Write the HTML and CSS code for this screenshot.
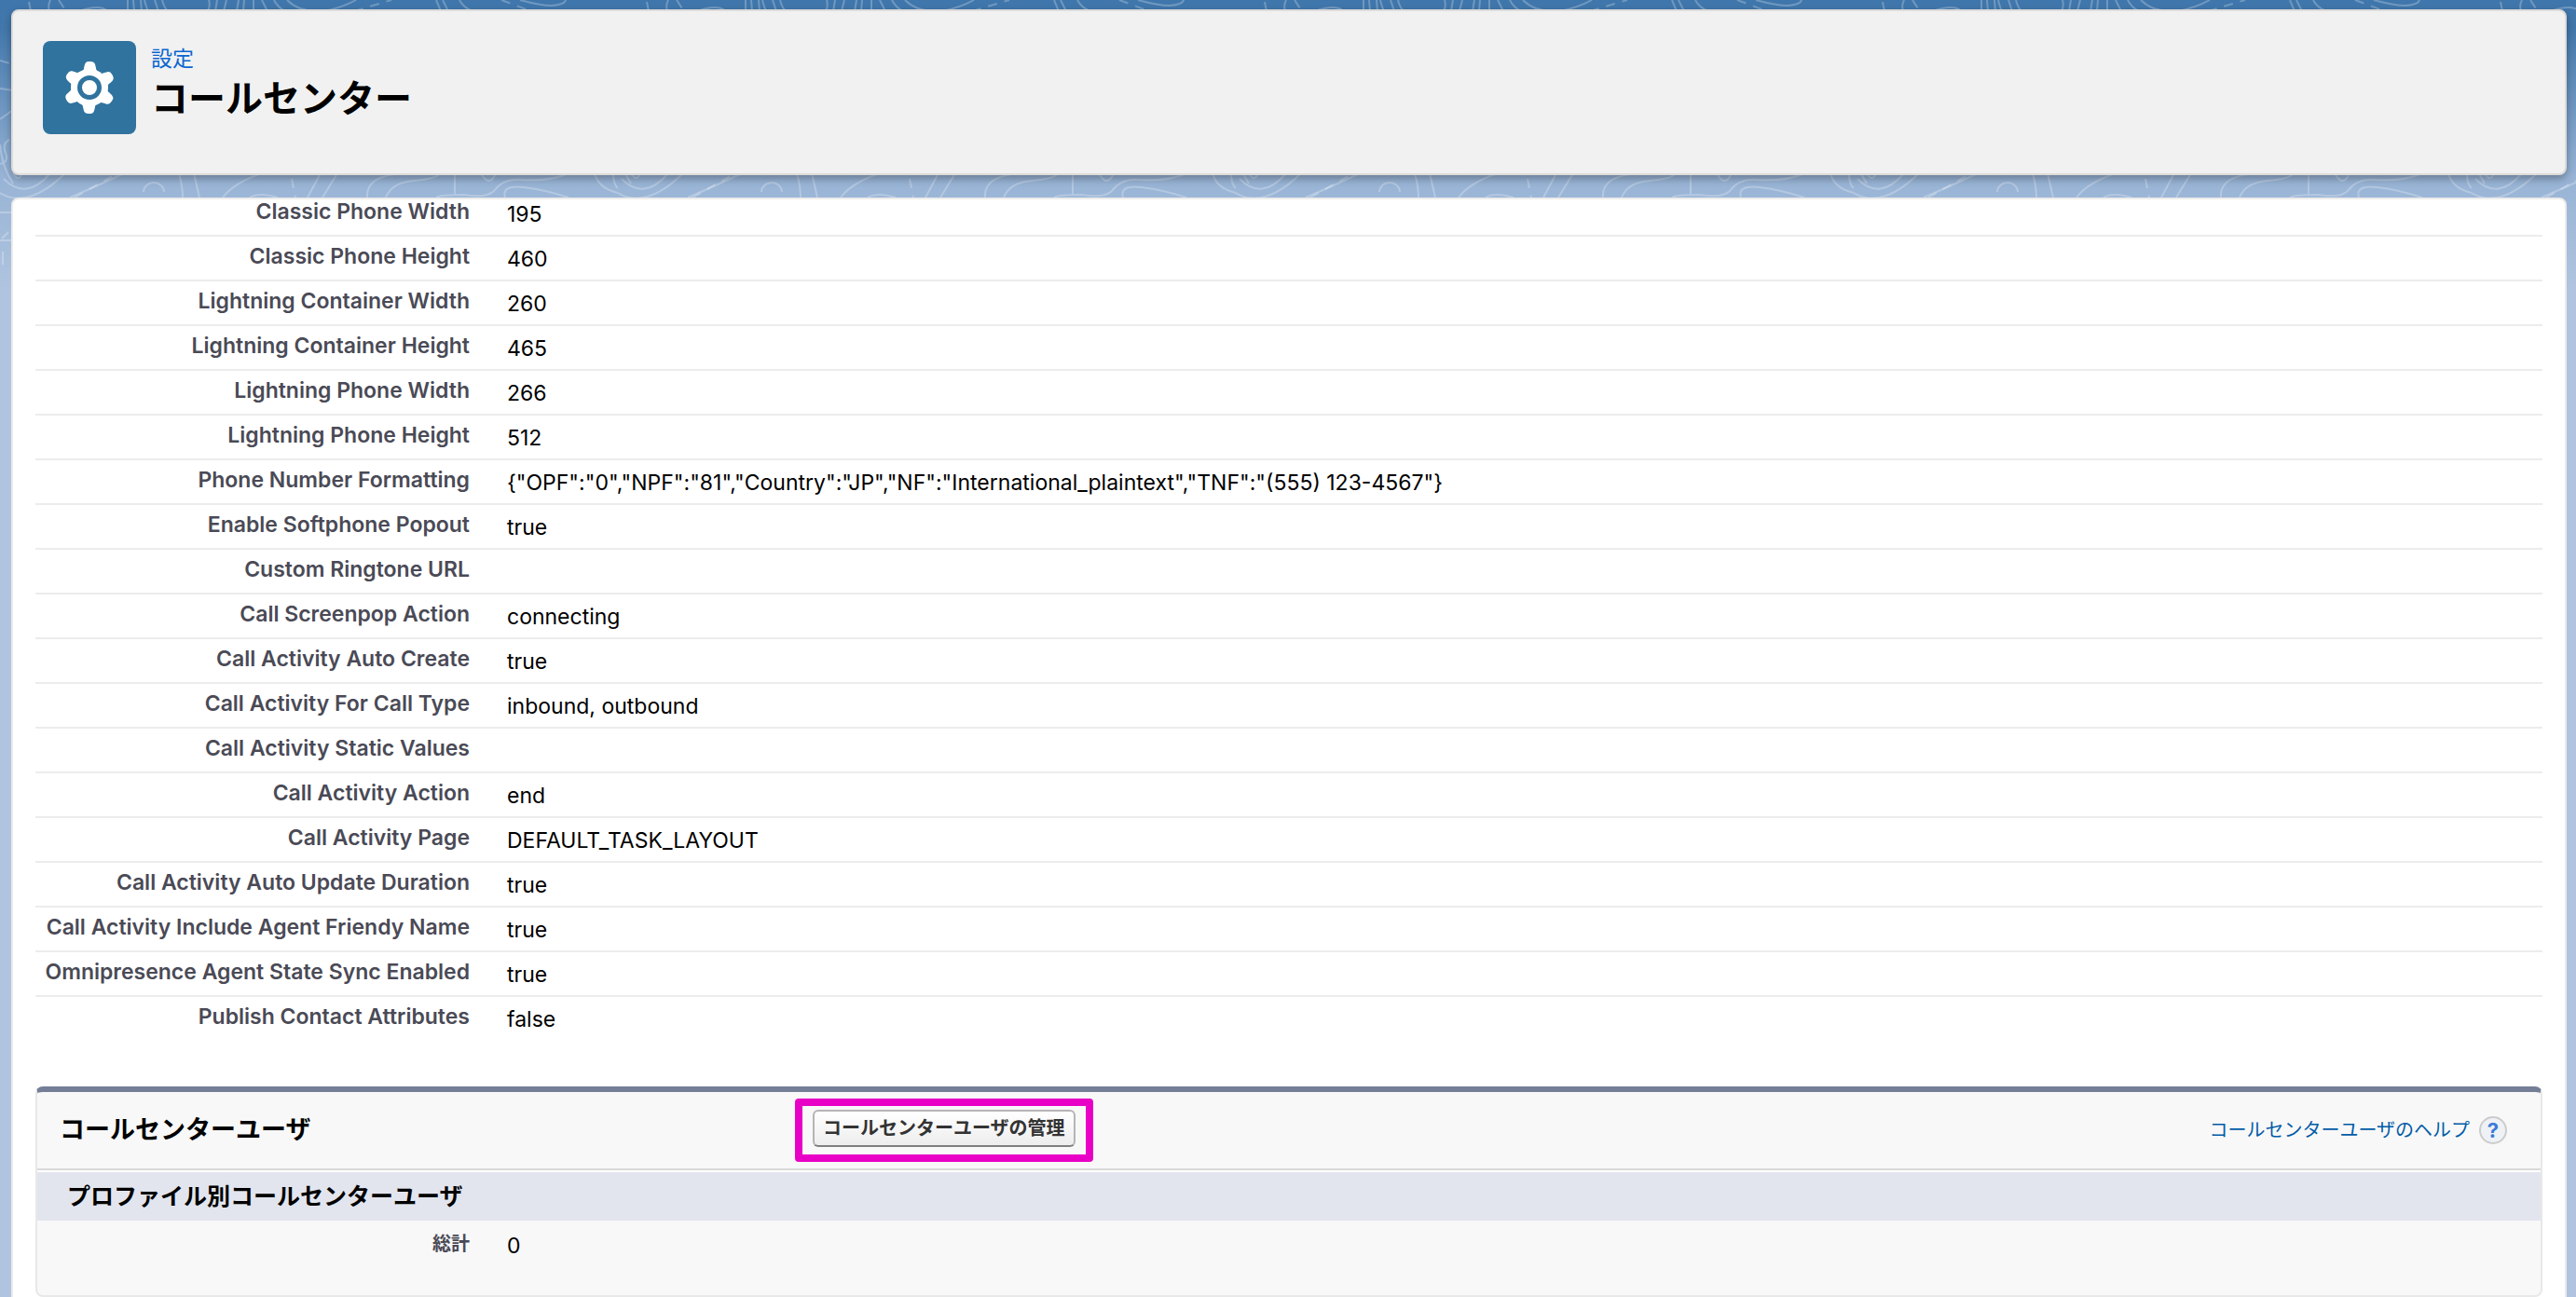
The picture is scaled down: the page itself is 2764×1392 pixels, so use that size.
FILE: index.html
```html
<!DOCTYPE html>
<html lang="ja">
<head>
<meta charset="UTF-8">
<meta name="viewport" content="width=device-width, initial-scale=1.0">
<title>コールセンター</title>
<link rel="stylesheet" href="styles.css">
</head>
<body>
<svg class="contours" aria-hidden="true">
  <defs>
    <pattern id="topo" width="663" height="400" patternUnits="userSpaceOnUse">
      <g fill="none" stroke="#fff" stroke-opacity=".25" stroke-width="2">
        <path d="M31 2l2 10M54 0q-3 6-1 12M85 12q22-8 31 0M137 0v12M143 0l1 12M151 0l1 12M155 0q2 8 4 12M166 0l4 12M174 0q2 8 6 12M224 0q2 6-1 12M233 0l-2 12M243 0l-3 12M256 0l-2 12M262 0l-1 12M272 0v12M281 0l6 12M294 0q4 8 12 12M308 0q14 14 40 12q20-4 34-12M468 0l5 12M475 0l6 12M493 0q4 8 14 12M558 0q22 6 34 6q14-1 15-6"/>
        <path d="M0 95l14 2M0 128l14-10M10 150q-8 4-4 14t-6 12M0 155q2 24 14 42M0 207q30 18 70-21M4 192q24 24 50-6M14 186q6 10 10 0M75 212q35-15 58-26M154 206a11 10 0 1 1 22 0M192 186q4 14 4 26M208 186l6 26M239 212q12-16 42-26M268 212q10-6 30 0M330 212l14-26M346 212l16-26M394 212q-2-24 40-26M414 212q6-16 30-18t28-8M488 186v24M468 212q4-3 30-3q24 4 32-4q10-14 30-12q30 2 50-7M542 212q-4-14 20-11t48 11"/>
        <path d="M516 186q9 16 16 0M638 186q4 16 25 21M0 228h14M0 258h14M3 270v14M658 186q0 12 5 16M640 20q10-10 23-8M638 72q12 4 25 2M647 106l16 40"/>
        <path stroke-dasharray="10 8" d="M80 212l46-26M63 0l8 12M380 12l40-12M313 192l4 20M538 0l32 12M0 65l14 4M2 256l8-8"/>
      </g>
    </pattern>
  </defs>
  <rect width="100%" height="100%" fill="url(#topo)"/>
</svg>

<header class="page-header">
  <div class="header-icon">
    <svg viewBox="0 0 100 100" width="100" height="100" aria-hidden="true">
      <defs>
        <path id="tooth" d="M41 33q3-1 3-4l1-4q1-3 4-3h2q4 0 5 3l1 4q0 3 3 4l-4 8h-12z"/>
      </defs>
      <g fill="#fff">
        <circle cx="50" cy="50" r="20"/>
        <use href="#tooth"/>
        <use href="#tooth" transform="rotate(60 50 50)"/>
        <use href="#tooth" transform="rotate(120 50 50)"/>
        <use href="#tooth" transform="rotate(180 50 50)"/>
        <use href="#tooth" transform="rotate(240 50 50)"/>
        <use href="#tooth" transform="rotate(300 50 50)"/>
      </g>
      <circle cx="50" cy="50" r="10.5" fill="none" stroke="#2f739e" stroke-width="5"/>
    </svg>
  </div>
  <div class="header-text">
    <a href="#" class="setup-link">設定</a>
    <h1>コールセンター</h1>
  </div>
</header>

<main class="content">
  <table class="detail">
    <tr><th scope="row">Classic Phone Width</th><td>195</td></tr>
    <tr><th scope="row">Classic Phone Height</th><td>460</td></tr>
    <tr><th scope="row">Lightning Container Width</th><td>260</td></tr>
    <tr><th scope="row">Lightning Container Height</th><td>465</td></tr>
    <tr><th scope="row">Lightning Phone Width</th><td>266</td></tr>
    <tr><th scope="row">Lightning Phone Height</th><td>512</td></tr>
    <tr><th scope="row">Phone Number Formatting</th><td>{"OPF":"0","NPF":"81","Country":"JP","NF":"International_plaintext","TNF":"(555) 123-4567"}</td></tr>
    <tr><th scope="row">Enable Softphone Popout</th><td>true</td></tr>
    <tr><th scope="row">Custom Ringtone URL</th><td></td></tr>
    <tr><th scope="row">Call Screenpop Action</th><td>connecting</td></tr>
    <tr><th scope="row">Call Activity Auto Create</th><td>true</td></tr>
    <tr><th scope="row">Call Activity For Call Type</th><td>inbound, outbound</td></tr>
    <tr><th scope="row">Call Activity Static Values</th><td></td></tr>
    <tr><th scope="row">Call Activity Action</th><td>end</td></tr>
    <tr><th scope="row">Call Activity Page</th><td>DEFAULT_TASK_LAYOUT</td></tr>
    <tr><th scope="row">Call Activity Auto Update Duration</th><td>true</td></tr>
    <tr><th scope="row">Call Activity Include Agent Friendy Name</th><td>true</td></tr>
    <tr><th scope="row">Omnipresence Agent State Sync Enabled</th><td>true</td></tr>
    <tr><th scope="row">Publish Contact Attributes</th><td>false</td></tr>
  </table>

  <section class="related">
    <div class="related-head">
      <h2>コールセンターユーザ</h2>
      <div class="highlight">
        <button type="button" class="btn">コールセンターユーザの管理</button>
      </div>
      <a href="#" class="help">
        コールセンターユーザのヘルプ
        <span class="help-icon">?</span>
      </a>
    </div>
    <h3>プロファイル別コールセンターユーザ</h3>
    <table class="detail total">
      <tr><th scope="row">総計</th><td>0</td></tr>
    </table>
  </section>
</main>
</body>
</html>
```

FILE: styles.css
```css
* {
  box-sizing: border-box;
}

body {
  margin: 0;
  padding: 10px 10px 0 12px;
  min-height: 100vh;
  font-family: Inter, "Noto Sans CJK JP", sans-serif;
  color: #000;
  background: #b0c4df linear-gradient(#3f76ab 0, #4277ab 30px, #97b3d5 190px, #b0c4df 310px) no-repeat;
  overflow: hidden;
}

.contours {
  position: absolute;
  top: 0;
  left: 0;
  z-index: -1;
  width: 100%;
  height: 300px;
}

/* page header */
.page-header {
  display: flex;
  gap: 16px;
  height: 178px;
  padding: 32px;
  background: #f1f1f1;
  border: 2px solid #dddbda;
  border-radius: 8px;
  box-shadow: 0 4px 8px rgba(0, 0, 0, 0.3);
}

.header-icon {
  width: 100px;
  height: 100px;
  background: #2f739e;
  border-radius: 8px;
}

.header-text {
  display: flex;
  flex-direction: column;
}

.setup-link {
  font-size: 23px;
  line-height: 38px;
  color: #0b66d0;
  text-decoration: none;
}

h1 {
  margin: 0;
  font-size: 40px;
  line-height: 48px;
}

/* detail panel */
.content {
  margin-top: 24px;
  padding: 0 24px;
  min-height: 1200px;
  background: #fff;
  border: 2px solid #ecebea;
  border-radius: 8px;
}

.detail {
  width: 100%;
  border-collapse: separate;
  border-spacing: 0;
  table-layout: fixed;
}

.detail th,
.detail td {
  height: 48px;
  padding: 0;
  vertical-align: top;
  border-bottom: 2px solid #ececec;
}

.detail th {
  width: 466px;
  padding-top: 8px;
  text-align: right;
  font-size: 23px;
  font-weight: 600;
  line-height: 26px;
  color: #4a4a56;
  white-space: nowrap;
}

.detail td {
  padding: 10px 0 0 40px;
  font-size: 23px;
  line-height: 28px;
}

.detail tr:first-child th,
.detail tr:first-child td {
  height: 40px;
}

.detail tr:first-child th {
  padding-top: 0;
}

.detail tr:first-child td {
  padding-top: 2px;
}

.detail tr:last-child th,
.detail tr:last-child td {
  border-bottom: 0;
}

/* related list */
.related {
  margin-top: 48px;
  height: 226px;
  background: #f8f8f8;
  border: 2px solid #e8e8e8;
  border-top: 6px solid #747e96;
  border-radius: 8px;
}

.related-head {
  display: flex;
  align-items: center;
  height: 84px;
  padding: 0 36px 0 24px;
  border-bottom: 2px solid #d9d9d9;
}

h2 {
  width: 789px;
  margin: 0;
  font-size: 27px;
  line-height: 32px;
}

.highlight {
  padding: 4px 11px 8px;
  border: 8px solid #e800c6;
  border-radius: 4px;
}

.btn {
  display: block;
  height: 40px;
  padding: 0 9px;
  font-family: inherit;
  font-size: 20px;
  font-weight: bold;
  line-height: 36px;
  color: #333;
  background: linear-gradient(#fff, #ededed);
  border: 2px solid #b5b5b5;
  border-bottom-color: #7f7f7f;
  border-radius: 6px;
}

.help {
  display: flex;
  align-items: center;
  gap: 10px;
  margin-left: auto;
  font-size: 20px;
  line-height: 28px;
  color: #015ba7;
  text-decoration: none;
}

.help-icon {
  width: 30px;
  height: 30px;
  font-size: 22px;
  font-weight: bold;
  line-height: 26px;
  text-align: center;
  color: #3a7bd5;
  background: #eef1f5;
  border: 2px solid #ccc;
  border-radius: 50%;
}

h3 {
  margin: 0;
  padding: 0 32px;
  font-size: 25px;
  line-height: 52px;
  background: #e2e5ee;
  border-top: 2px solid #fff;
}

.total tr:first-child th {
  width: 464px;
  padding-top: 12px;
  font-size: 20px;
}

.total tr:first-child td {
  padding-top: 13px;
}
```
